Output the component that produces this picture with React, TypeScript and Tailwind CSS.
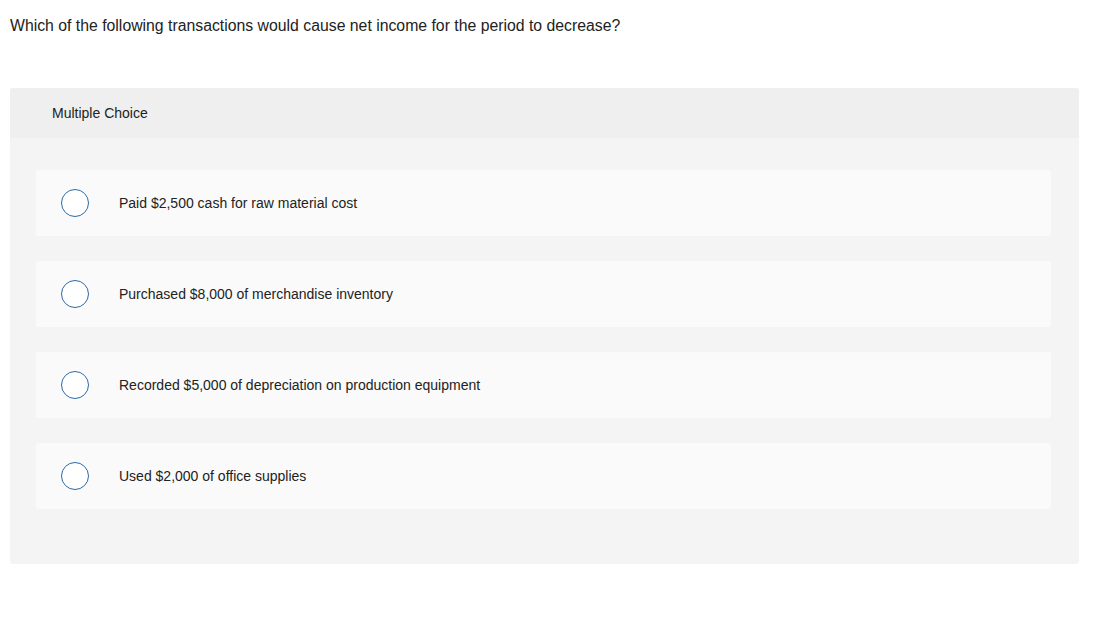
export default function App() {
  const options = [
    'Paid $2,500 cash for raw material cost',
    'Purchased $8,000 of merchandise inventory',
    'Recorded $5,000 of depreciation on production equipment',
    'Used $2,000 of office supplies',
  ]

  return (
    <div className="min-h-[617px] bg-white text-[#222] font-['Liberation_Sans',Arial,sans-serif]">
      <div className="px-[10px] pt-[16px] text-[15.8px] leading-[19px]">
        Which of the following transactions would cause net income for the period to decrease?
      </div>
      <div className="mx-[10px] mt-[53px] w-[1069px] rounded-[3px] bg-[#f4f4f4]">
        <div className="flex h-[50px] items-center rounded-t-[3px] bg-[#efefef] pl-[42px] pt-px text-[14px]">
          Multiple Choice
        </div>
        <div className="flex flex-col gap-[25px] pl-[26px] pr-[28px] pt-[32px] pb-[55px]">
          {options.map(text => (
            <div key={text} className="flex h-[66px] items-center rounded-[3px] bg-[#fafafa]">
              <span className="ml-[25px] h-[28px] w-[28px] shrink-0 rounded-full border-[1.5px] border-[#2b6aa5] bg-white" />
              <span className="ml-[30px] pt-px text-[14px]">{text}</span>
            </div>
          ))}
        </div>
      </div>
    </div>
  )
}
